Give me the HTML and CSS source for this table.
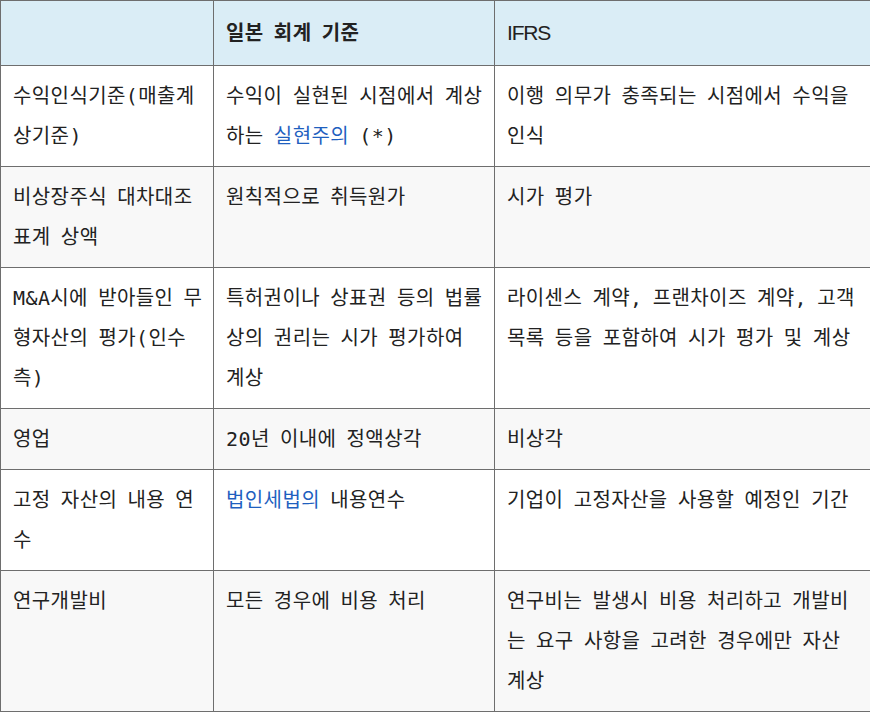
FILE: index.html
```html
<!DOCTYPE html>
<html lang="ko">
<head>
<meta charset="utf-8">
<title>일본 회계 기준 vs IFRS</title>
<link rel="stylesheet" href="styles.css">
</head>
<body>
<table class="cmp">
  <colgroup>
    <col class="c1">
    <col class="c2">
    <col class="c3">
  </colgroup>
  <thead>
    <tr>
      <th></th>
      <th class="bold">일본 회계 기준</th>
      <th class="latin">IFRS</th>
    </tr>
  </thead>
  <tbody>
    <tr>
      <td>수익인식기준(매출계상기준)</td>
      <td><span class="seg">수익이 실현된 시점에서 계상</span><span class="seg">하는 <a class="link">실현주의</a> (*)</span></td>
      <td>이행 의무가 충족되는 시점에서 수익을 인식</td>
    </tr>
    <tr class="alt">
      <td>비상장주식 대차대조표계 상액</td>
      <td>원칙적으로 취득원가</td>
      <td>시가 평가</td>
    </tr>
    <tr>
      <td>M&amp;A시에 받아들인 무형자산의 평가(인수측)</td>
      <td>특허권이나 상표권 등의 법률상의 권리는 시가 평가하여 계상</td>
      <td>라이센스 계약, 프랜차이즈 계약, 고객 목록 등을 포함하여 시가 평가 및 계상</td>
    </tr>
    <tr class="alt">
      <td>영업</td>
      <td>20년 이내에 정액상각</td>
      <td>비상각</td>
    </tr>
    <tr>
      <td>고정 자산의 내용 연수</td>
      <td><a class="link">법인세법의</a> 내용연수</td>
      <td>기업이 고정자산을 사용할 예정인 기간</td>
    </tr>
    <tr class="alt">
      <td>연구개발비</td>
      <td>모든 경우에 비용 처리</td>
      <td>연구비는 발생시 비용 처리하고 개발비는 요구 사항을 고려한 경우에만 자산 계상</td>
    </tr>
  </tbody>
</table>
</body>
</html>
```

FILE: styles.css
```css
html, body {
  margin: 0;
  padding: 0;
  background: #ffffff;
}

.cmp {
  width: 870px;
  border-collapse: collapse;
  table-layout: fixed;
  font-family: "DejaVu Sans Mono", "Noto Sans CJK KR", monospace;
  font-size: 20px;
  letter-spacing: 0.4px;
  word-spacing: -2.2px;
  color: #222222;
}

.c1 { width: 213px; }
.c2 { width: 281px; }
.c3 { width: 376px; }

.cmp th,
.cmp td {
  border: 1px solid #6e6e6e;
  text-align: left;
  vertical-align: top;
  line-height: 40px;
  padding: 10px 7px 10px 12px;
  font-weight: normal;
}

.cmp thead th {
  background: #daedf6;
  padding-top: 12px;
  padding-bottom: 12px;
}

.cmp thead th.bold {
  font-weight: bold;
}

.cmp thead th.latin {
  font-family: "Liberation Sans", sans-serif;
  font-size: 21px;
  letter-spacing: -1.2px;
  word-spacing: 0;
}

.cmp tr.alt td {
  background: #f8f8f8;
}

.link {
  color: #1f5fbf;
  text-decoration: none;
}
```
